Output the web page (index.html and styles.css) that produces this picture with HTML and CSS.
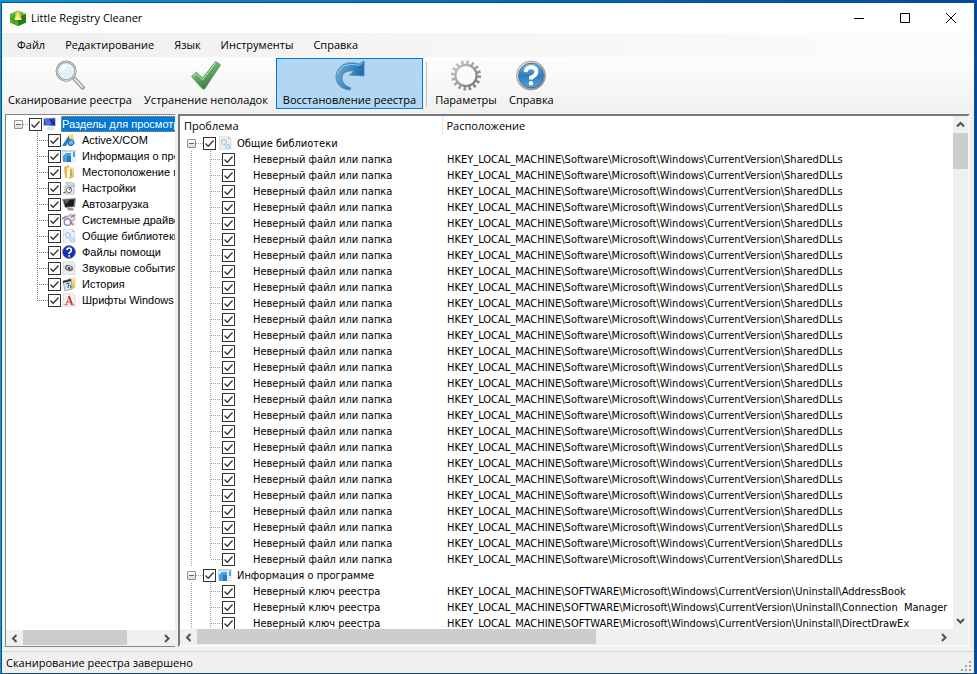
FILE: index.html
```html
<!DOCTYPE html>
<html lang="ru">
<head>
<meta charset="utf-8">
<title>Little Registry Cleaner</title>
<link rel="stylesheet" href="styles.css">
</head>
<body>
<svg class="defs" width="0" height="0" aria-hidden="true">
  <defs>
    <linearGradient id="gGreen" x1="0" y1="0" x2="0.6" y2="1"><stop offset="0" stop-color="#a9dba0"/><stop offset="1" stop-color="#2c7a35"/></linearGradient>
    <linearGradient id="gBlue" x1="0" y1="0" x2="0" y2="1"><stop offset="0" stop-color="#7fc0e6"/><stop offset=".5" stop-color="#2b7cc0"/><stop offset="1" stop-color="#56a5d3"/></linearGradient>
    <linearGradient id="gArrow" x1="0" y1="0" x2="1" y2=".4"><stop offset="0" stop-color="#6fb4d8"/><stop offset="1" stop-color="#1b67ae"/></linearGradient>
    <linearGradient id="gMetal" x1="0" y1="0" x2="1" y2="1"><stop offset="0" stop-color="#c4c4c4"/><stop offset="1" stop-color="#777"/></linearGradient>
    <linearGradient id="gRing" x1="0" y1="0" x2="1" y2="1"><stop offset="0" stop-color="#f2f2f2"/><stop offset="1" stop-color="#777"/></linearGradient>
    <linearGradient id="gFolder" x1="0" y1="0" x2="0" y2="1"><stop offset="0" stop-color="#fbeab0"/><stop offset="1" stop-color="#e3b44c"/></linearGradient>
  </defs>
  <symbol id="i-monitor" viewBox="0 0 14 14"><path d="M0 1l13-.5v9L0 9z" fill="#c5cbe6"/><path d="M1 1.700l11-.4v7.500L1 8z" fill="#2a3bb0"/><path d="M1 2h5l3 3-2 3H3z" fill="#4e70dd"/><path d="M6 2l6 4v2L8 5z" fill="#18206e"/><path d="M5 10h5l2 2-4 1.500-5-1z" fill="#dcdde2"/></symbol>
  <symbol id="i-activex" viewBox="0 0 14 14"><path d="M5 2l6-2 2 11-7 2z" fill="url(#gFolder)"/><path d="M11 0l1 10-4 2" fill="#f6dd93"/><path d="M6.500 3l4 10H7.500L6 9.500 4 13H0z" fill="#2379c6"/><circle cx="9" cy="9.500" r="2.800" fill="#65b8e6" stroke="#1768ae"/></symbol>
  <symbol id="i-program" viewBox="0 0 14 14"><path d="M0 1h14v11H0z" fill="#bfd6e9"/><path d="M1 3h13v10H1z" fill="#e3f0f9"/><path d="M1 13V7l3-3h5v9z" fill="#4ba2d6"/><path d="M5 13V7h4v6z" fill="#2878c3"/><path d="M11 3h2v5h-2z" fill="#4aa6df"/></symbol>
  <symbol id="i-folder" viewBox="0 0 14 14"><path d="M2 2l5-2 1 12-5 1z" fill="#e5b652"/><path d="M7 1l5 2v9l-5 2z" fill="url(#gFolder)"/><path d="M5 3l3-1v10l-3 1z" fill="#fdf8e3"/><path d="M9 4v7" stroke="#99834d"/></symbol>
  <symbol id="i-settings" viewBox="0 0 14 14"><path d="M4 1l8 1 1 3-7 1z" fill="#d6d9dc" stroke="#a5a8ab" stroke-width=".6"/><path d="M3 5h9v8H3z" fill="#eceeef" stroke="#999" stroke-width=".7"/><circle cx="7" cy="9" r="2.700" fill="#fff" stroke="#707a82"/><path d="M7 9l2-3" stroke="#444"/><path d="M1 12l3-1" stroke="#c44"/></symbol>
  <symbol id="i-startup" viewBox="0 0 14 14"><path d="M0 2l14-1-1 9-10 1z" fill="#8a8a8a"/><path d="M1.500 3l11-.8-1 7-8 .8z" fill="#171b1d"/><path d="M5 11h6l1 2.500H6z" fill="#999"/><path d="M2 3l6-.5L4 7z" fill="#5c666a"/></symbol>
  <symbol id="i-driver" viewBox="0 0 14 14"><path d="M7 0h7v13H6z" fill="#ededed"/><circle cx="9" cy="5" r="3.300" fill="#d5e6f8" stroke="#8d9cc5"/><circle cx="5.500" cy="9" r="3.300" fill="#fff" stroke="#7793c5" stroke-width="1.500"/><path d="M0 6l5-3M9 4l4-2M8 8l3 4" stroke="#cf7155" stroke-width="1.600"/></symbol>
  <symbol id="i-library" viewBox="0 0 14 14"><path d="M1.500 0h8.500l3 3v11H1.500z" fill="#eef0f1" stroke="#d2d2d2" stroke-width=".7"/><path d="M10 0v3h3" fill="#c4c4c4"/><circle cx="6" cy="6" r="2.500" fill="#d7efff" stroke="#62a8d8" stroke-dasharray="1.600 .6"/><circle cx="10" cy="10.500" r="2" fill="#d7efff" stroke="#6fb0da" stroke-dasharray="1.600 .6"/></symbol>
  <symbol id="i-help" viewBox="0 0 14 14"><circle cx="7" cy="7" r="6.500" fill="#1530b0" stroke="#7c89c8" stroke-width=".8"/><path d="M4.800 5.200Q5 3 7.100 3T9.300 5T7.200 8v1" fill="none" stroke="#fff" stroke-width="1.700"/><circle cx="7.200" cy="11" r="1" fill="#fff"/></symbol>
  <symbol id="i-sound" viewBox="0 0 14 14"><path d="M1 0h9l3 3v11H1z" fill="#ececec" stroke="#cfcfcf" stroke-width=".7"/><ellipse cx="7" cy="7" rx="4.300" ry="3" fill="#777" transform="rotate(20 7 7)"/><ellipse cx="7" cy="6.600" rx="2.500" ry="1.500" fill="#ddd"/><circle cx="7" cy="7" r="1" fill="#222"/></symbol>
  <symbol id="i-history" viewBox="0 0 14 14"><path d="M6 1l8-1-1 11-7 2z" fill="url(#gFolder)"/><path d="M1 4l8-2 1 10-7 2z" fill="#dbe8ee" stroke="#777" stroke-width=".6"/><path d="M1 4l8-2v2L1 6z" fill="#333"/><path d="M4 7l3-1-1 5M8 8l1 3" stroke="#24689b" fill="none"/></symbol>
  <symbol id="i-fonts" viewBox="0 0 14 14"><path d="M1 0h9l3 3v11H1z" fill="#f1f1f1" stroke="#cfcfcf" stroke-width=".7"/><path d="M4 11.500L7 3.500" stroke="#d8694f" stroke-width="1"/><path d="M7 3l3 8.500" stroke="#cf3622" stroke-width="1.900"/><path d="M5 9h4M2.500 11.700h3M8.500 11.700h3.500" fill="none" stroke="#d2412d" stroke-width=".9"/></symbol>
</svg>

<div class="window">
  <header class="titlebar">
    <svg class="logo" viewBox="0 0 16 16" aria-hidden="true"><path d="M0 4l8-3.500L16 4v8.500L8 16l-8-3.500z" fill="#3c9a1f"/><path d="M0 4l8 3v9l-8-3.500z" fill="#4fb52a"/><path d="M8 7l8-3v8.500L8 16z" fill="#287d18"/><path d="M0 4l8-3.500L16 4 8 7z" fill="#78cf4c"/><path d="M0 8l8 3.500L16 8M4 2.500v11.500M12 2.500v11.500" fill="none" stroke="#1f6e16" stroke-width=".5"/><path d="M8 0L5 7q-1 2-1 3h8q0-1-1-3z" fill="#f2d25c"/><path d="M8 1v5l2 4H5l2-4z" fill="#fff1a8"/></svg>
    <h1>Little Registry Cleaner</h1>
    <div class="caption">
      <button type="button" aria-label="Свернуть"><svg viewBox="0 0 10 10"><path d="M0 5.500h10"/></svg></button>
      <button type="button" aria-label="Развернуть"><svg viewBox="0 0 10 10"><path d="M.5.5h9v9h-9z"/></svg></button>
      <button type="button" aria-label="Закрыть"><svg viewBox="0 0 10 10"><path d="M0 0l10 10M10 0L0 10"/></svg></button>
    </div>
  </header>

  <nav class="menu">
    <button type="button">Файл</button>
    <button type="button">Редактирование</button>
    <button type="button">Язык</button>
    <button type="button">Инструменты</button>
    <button type="button">Справка</button>
  </nav>

  <div class="toolbar" role="toolbar">
    <button type="button"><svg viewBox="0 0 32 32"><path d="M19 20l2.500-2.500L31 28q0 2-2.500 2.500z" fill="#aaa" stroke="#777" stroke-width=".7"/><path d="M20.500 19l8.500 9.500" stroke="#f4f4f4" stroke-width="1.500"/><circle cx="12" cy="11.500" r="9.700" fill="#e3f2f8" stroke="#858585" stroke-width="2.400"/><circle cx="12" cy="11.500" r="9.700" fill="none" stroke="#e4e4e4"/><path d="M5 12a7 7 0 0 1 8-7q2 3-8 7z" fill="#fff"/></svg>Сканирование реестра</button>
    <button type="button"><svg viewBox="0 0 32 32"><path d="M1 17l5-4.500 6.500 6L26 1.500 31 5 14.500 30h-2z" fill="url(#gGreen)" stroke="#4c9150" stroke-width=".8"/><path d="M2.500 17L6 14l6.500 6.500L26 3" fill="none" stroke="#c9ebc2" stroke-width="1"/></svg>Устранение неполадок</button>
    <button type="button" class="active"><svg viewBox="0 0 32 32"><path d="M16 31C5 30 1 23 1.500 16 2.500 6 13 0 25 4l5.500-3v15.500l-15-1 4.500-4C11 10 7 15 8 20q1 6 9 9z" fill="url(#gArrow)" stroke="#5288ae" stroke-width=".8"/><path d="M3 15C5 6 14 3 25 5.500l4-2.500" fill="none" stroke="#9ed0e9" stroke-width="1"/></svg>Восстановление реестра</button>
    <span class="divider"></span>
    <button type="button"><svg viewBox="0 0 32 32"><circle cx="16" cy="16" r="13.500" fill="none" stroke="url(#gMetal)" stroke-width="4" stroke-dasharray="2.400 2.902"/><circle cx="16" cy="16" r="11" fill="#fafafa" stroke="url(#gMetal)" stroke-width="2.400"/></svg>Параметры</button>
    <button type="button"><svg viewBox="0 0 32 32"><circle cx="16" cy="16" r="15" fill="url(#gRing)" stroke="#999" stroke-width=".8"/><circle cx="16" cy="16" r="12.700" fill="url(#gBlue)" stroke="#2668a0" stroke-width=".8"/><path d="M10.500 12.500Q11 7.500 16 7.500t5.500 4T16 18v2" fill="none" stroke="#fff" stroke-width="4"/><circle cx="16" cy="24" r="2.300" fill="#fff"/></svg>Справка</button>
  </div>

  <main class="panes">
    <section class="pane sections" aria-label="Разделы">
      <ul class="tree">
        <li><span class="expander"></span><span class="stub"></span><label><input type="checkbox" checked><svg><use href="#i-monitor"/></svg><span class="selected">Разделы для просмотра</span></label>
          <ul>
            <li><label><input type="checkbox" checked><svg><use href="#i-activex"/></svg><span>ActiveX/COM</span></label></li>
            <li><label><input type="checkbox" checked><svg><use href="#i-program"/></svg><span>Информация о программе</span></label></li>
            <li><label><input type="checkbox" checked><svg><use href="#i-folder"/></svg><span>Местоположение программ</span></label></li>
            <li><label><input type="checkbox" checked><svg><use href="#i-settings"/></svg><span>Настройки</span></label></li>
            <li><label><input type="checkbox" checked><svg><use href="#i-startup"/></svg><span>Автозагрузка</span></label></li>
            <li><label><input type="checkbox" checked><svg><use href="#i-driver"/></svg><span>Системные драйверы</span></label></li>
            <li><label><input type="checkbox" checked><svg><use href="#i-library"/></svg><span>Общие библиотеки</span></label></li>
            <li><label><input type="checkbox" checked><svg><use href="#i-help"/></svg><span>Файлы помощи</span></label></li>
            <li><label><input type="checkbox" checked><svg><use href="#i-sound"/></svg><span>Звуковые события</span></label></li>
            <li><label><input type="checkbox" checked><svg><use href="#i-history"/></svg><span>История</span></label></li>
            <li><label><input type="checkbox" checked><svg><use href="#i-fonts"/></svg><span>Шрифты Windows</span></label></li>
          </ul>
        </li>
      </ul>
      <div class="scroll">
        <button type="button" aria-label="Влево"><svg viewBox="0 0 9 9"><path d="M6.500 1L3 4.500 6.500 8"/></svg></button>
        <div class="track"><div class="thumb"></div></div>
        <button type="button" aria-label="Вправо"><svg viewBox="0 0 9 9"><path d="M3 1l3.500 3.500L3 8"/></svg></button>
      </div>
    </section>

    <section class="pane results" aria-label="Проблемы">
      <div class="view">
        <table>
          <colgroup><col class="c-problem"><col></colgroup>
          <thead><tr><th>Проблема</th><th>Расположение</th></tr></thead>
          <tbody id="rows"></tbody>
        </table>
      </div>
      <div class="scroll vertical">
        <button type="button" aria-label="Вверх"><svg viewBox="0 0 9 9"><path d="M1 6.500L4.500 3 8 6.500"/></svg></button>
        <div class="track"><div class="thumb"></div></div>
        <button type="button" aria-label="Вниз"><svg viewBox="0 0 9 9"><path d="M1 3l3.500 3.500L8 3"/></svg></button>
      </div>
      <div class="scroll">
        <button type="button" aria-label="Влево"><svg viewBox="0 0 9 9"><path d="M6.500 1L3 4.500 6.500 8"/></svg></button>
        <div class="track"><div class="thumb"></div></div>
        <button type="button" aria-label="Вправо"><svg viewBox="0 0 9 9"><path d="M3 1l3.500 3.500L3 8"/></svg></button>
      </div>
    </section>
  </main>

  <footer class="status"><span>Сканирование реестра завершено</span>
    <svg class="grip" viewBox="0 0 11 11" aria-hidden="true"><path d="M8 0h2v2H8zM4 4h2v2H4zM8 4h2v2H8zM0 8h2v2H0zM4 8h2v2H4zM8 8h2v2H8z" fill="#a5a5a5"/></svg>
  </footer>
</div>
<script src="script.js"></script>
</body>
</html>
```
FILE: styles.css
```css
* { box-sizing: border-box; }
body {
  margin: 0;
  height: 100vh;
  padding: 2px 2px 0 1px;
  background: linear-gradient(90deg, #0a94e2, #0069c0 50%, #0047ad);
  font: 11px/16px "Open Sans", "Noto Sans", sans-serif;
  color: #000;
}
button { font: inherit; color: inherit; background: none; border: 0; padding: 0; }
ul { list-style: none; margin: 0; padding: 0; }
.defs { position: absolute; }

.window {
  display: flex;
  flex-direction: column;
  height: 100%;
  border: 1px solid #17506f;
  background: #f0f0f0;
  overflow: hidden;
}

.titlebar { display: flex; align-items: center; height: 30px; padding-left: 8px; background: #fff; }
.logo { width: 16px; height: 16px; margin-right: 5px; }
h1 { margin: 0; font-size: 11px; font-weight: 400; flex: 1; }
.caption { display: flex; }
.caption button { width: 46px; height: 30px; display: grid; place-items: center; }
.caption svg { width: 10px; height: 10px; fill: none; stroke: #000; overflow: visible; }

.menu {
  display: flex;
  gap: 20px;
  height: 24px;
  padding-left: 15px;
  background: linear-gradient(90deg, #f0f0f0, #fcfcfc);
}

.toolbar {
  display: flex;
  height: 55px;
  padding: 1px 0 3px;
  background: linear-gradient(#fdfdfd, #f6f6f6 60%, #f0f0f0);
}
.toolbar button {
  display: flex;
  flex-direction: column;
  align-items: center;
  gap: 1px;
  min-width: 56px;
  padding: 1px 5px 0;
  border: 1px solid transparent;
  white-space: nowrap;
}
.toolbar button:nth-child(-n+2) { min-width: 136px; }
.toolbar .active { min-width: 147px; margin-left: 2px; background: #b3d7f3; border-color: #0078d7; }
.toolbar svg { width: 32px; height: 32px; }
.divider { width: 1px; margin: 4px 2px 2px 3px; background: #bdbdbd; }
.divider + button { min-width: 74px; }

.panes { flex: 1; min-height: 0; display: flex; gap: 3px; padding: 2px 4px 4px 3px; }
.pane { display: grid; grid-template-rows: minmax(0, 1fr) 16px; background: #fff; overflow: hidden; }
.sections {
  flex: 0 0 18%;
  grid-template-columns: minmax(0, 1fr);
  max-width: 170px;
  border: 1px solid #828790;
  border-right: 0;
  padding-top: 1px;
  font: 11px/16px "Liberation Sans", Arial, sans-serif;
}
.results {
  flex: 1;
  min-width: 0;
  grid-template-columns: minmax(0, 1fr) 15px;
  border: 2px solid #7a7a7a;
  border-color: #7a7a7a #f8f8f8 #f8f8f8 #7a7a7a;
  font: 11px/16px "DejaVu Sans Condensed", Tahoma, sans-serif;
}
.results .scroll:last-child { grid-column: 1 / -1; padding-right: 16px; }

input[type="checkbox"] {
  appearance: none;
  flex: none;
  width: 13px;
  height: 13px;
  margin: 0;
  border: 1px solid #333;
  background: #fff;
}
input[type="checkbox"]:checked {
  background: #fff url("data:image/svg+xml,%3Csvg xmlns='http://www.w3.org/2000/svg' viewBox='0 0 11 11'%3E%3Cpath d='M1.5 5.500l2.700 2.700L9.500 2.500' fill='none' stroke='%23333' stroke-width='1.300'/%3E%3C/svg%3E");
}
label { display: flex; align-items: center; white-space: nowrap; }
label svg { flex: none; width: 14px; height: 14px; }

.expander {
  flex: none;
  width: 9px;
  height: 9px;
  border: 1px solid #919191;
  border-radius: 1px;
  background: linear-gradient(#4b63a7, #4b63a7) center / 5px 1px no-repeat, linear-gradient(#fff, #dcdcdc);
}
.stub {
  flex: none;
  width: 7px;
  height: 1px;
  background: repeating-linear-gradient(90deg, #a0a0a0 0 1px, transparent 1px 2px);
}
.rail {
  flex: none;
  width: 1px;
  height: 16px;
  background: repeating-linear-gradient(#a0a0a0 0 1px, transparent 1px 2px);
}

.tree { overflow: hidden; }
.tree > li { display: grid; grid-template-columns: 9px 6px 1fr; align-items: center; padding-left: 8px; }
.tree .stub { width: 6px; }
.tree label { height: 16px; }
.tree > li > label svg { margin: 0 4px 0 1px; }
.selected { padding: 0 1px; color: #fff; background: #0078d7; outline: 1px dotted #e08a3c; outline-offset: -1px; }
.tree ul {
  grid-column: 1 / -1;
  margin-left: 23px;
  background: repeating-linear-gradient(#808080 0 1px, transparent 1px 2px) 0 0 / 1px calc(100% - 8px) no-repeat;
}
.tree ul label {
  padding-left: 11px;
  background: repeating-linear-gradient(90deg, #808080 0 1px, transparent 1px 2px) 0 8px / 11px 1px no-repeat;
}
.tree ul svg { margin: 0 6px 0 1px; }

.view { overflow: hidden; }
table { width: 100%; table-layout: fixed; border-collapse: collapse; }
.c-problem { width: 262px; }
th, td { padding: 0; height: 16px; text-align: left; font-weight: 400; white-space: pre; overflow: hidden; }
th { height: 19px; padding-left: 4px; font: 11px/19px "Open Sans", "Noto Sans", sans-serif; }
th:first-child { border-right: 1px solid #e5e5e5; }
td { line-height: 15px; }
td + td { padding: 1px 0 0 5px; }
.row { display: flex; align-items: center; height: 16px; }
.row .rail { margin-left: 11px; }
.row .rail + .rail { margin-left: 18px; }
.row .rail.end { height: 8px; align-self: flex-start; }
.row .stub { width: 11px; }
.row label { height: 16px; }
.row label span { padding-top: 1px; }
.row.child label { gap: 18px; }
.row.group { padding-left: 7px; }
.row.group .stub { width: 7px; }
.row.group label svg { margin: 0 5px 0 2px; }

.scroll { display: flex; background: #f0f0f0; }
.scroll button { flex: none; width: 17px; display: grid; place-items: center; }
.scroll svg { width: 9px; height: 9px; fill: none; stroke: #505050; stroke-width: 2; }
.track { flex: 1; }
.thumb { width: 77%; height: 15px; background: #cdcdcd; }
.results .thumb { width: 54%; }
.vertical { flex-direction: column; }
.vertical button { width: auto; height: 17px; }
.results .vertical .thumb { width: auto; height: 36px; }

.status {
  display: flex;
  justify-content: space-between;
  align-items: center;
  height: 22px;
  padding-left: 4px;
  border-top: 1px solid #d7d7d7;
}
.grip { width: 11px; height: 11px; margin: 8px 2px 0 0; }
```
FILE: script.js
```js
const SHARED = "HKEY_LOCAL_MACHINE\\Software\\Microsoft\\Windows\\CurrentVersion\\SharedDLLs";
const UNINSTALL = "HKEY_LOCAL_MACHINE\\SOFTWARE\\Microsoft\\Windows\\CurrentVersion\\Uninstall\\";

const groups = [
  { title: "Общие библиотеки", icon: "library", problem: "Неверный файл или папка", paths: Array(26).fill(SHARED), complete: true },
  { title: "Информация о программе", icon: "program", problem: "Неверный ключ реестра",
    paths: ["AddressBook", "Connection  Manager", "DirectDrawEx"].map(name => UNINSTALL + name), complete: false }
];

document.getElementById("rows").innerHTML = groups.map(group => {
  const head = `<tr><td><div class="row group"><span class="expander"></span><span class="stub"></span><label><input type="checkbox" checked><svg><use href="#i-${group.icon}"/></svg><span>${group.title}</span></label></div></td><td></td></tr>`;
  return head + group.paths.map((path, i) => {
    const end = group.complete && i === group.paths.length - 1 ? " end" : "";
    return `<tr><td><div class="row child"><span class="rail"></span><span class="rail${end}"></span><span class="stub"></span><label><input type="checkbox" checked><span>${group.problem}</span></label></div></td><td>${path}</td></tr>`;
  }).join("");
}).join("");
```
